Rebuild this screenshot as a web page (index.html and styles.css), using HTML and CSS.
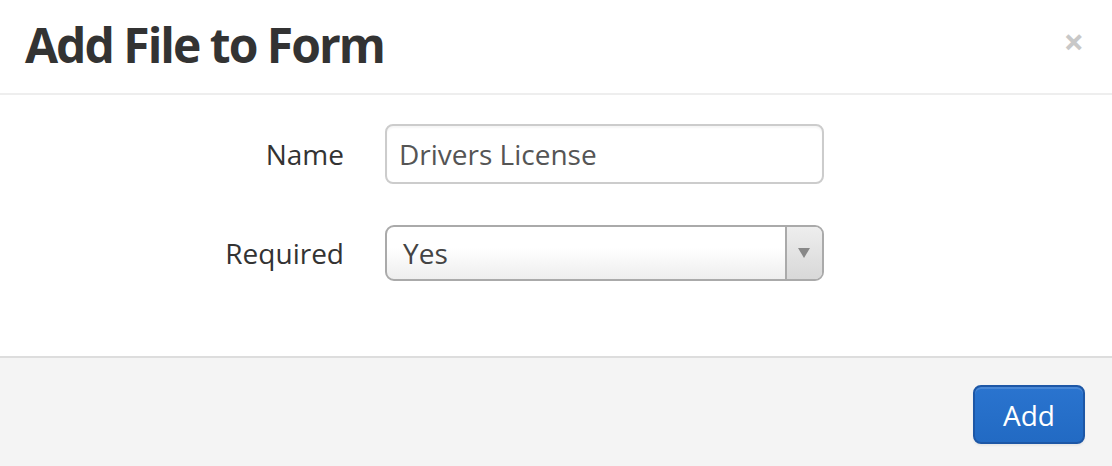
FILE: index.html
```html
<!DOCTYPE html>
<html>
<head>
<meta charset="utf-8">
<link rel="stylesheet" href="styles.css">
</head>
<body>
<div class="modal">
  <div class="modal-header">
    <h3 class="title">Add File to Form</h3>
    <span class="close">&times;</span>
  </div>
  <div class="modal-body">
    <div class="form-row">
      <label class="label">Name</label>
      <div class="text-input">Drivers License</div>
    </div>
    <div class="form-row">
      <label class="label">Required</label>
      <div class="select">
        <span class="select-value">Yes</span>
        <span class="select-arrow"><span class="tri"></span></span>
      </div>
    </div>
  </div>
  <div class="modal-footer">
    <button class="btn-primary">Add</button>
  </div>
</div>
</body>
</html>
```

FILE: styles.css
```css
html, body {
  margin: 0;
  padding: 0;
  background: #fff;
  font-family: "Open Sans", "Liberation Sans", sans-serif;
}
.modal {
  width: 1112px;
  height: 466px;
  display: flex;
  flex-direction: column;
  background: #fff;
}
.modal-header {
  height: 95px;
  box-sizing: border-box;
  border-bottom: 2px solid #eeeeee;
  padding: 0 28px 0 25px;
  display: flex;
  align-items: center;
  justify-content: space-between;
}
.title {
  margin: 0;
  font-size: 48px;
  font-weight: 700;
  color: #333;
  letter-spacing: -2px;
  line-height: 1;
  padding-bottom: 3px;
}
.close {
  color: #c8c8c8;
  font-size: 36px;
  font-weight: 700;
  line-height: 1;
  margin-top: -10px;
}
.modal-body {
  flex: 1;
  padding-top: 29px;
  display: flex;
  flex-direction: column;
  gap: 41px;
}
.form-row {
  display: flex;
  align-items: center;
  gap: 41px;
}
.label {
  width: 344px;
  text-align: right;
  font-size: 28px;
  color: #333;
}
.text-input {
  width: 439px;
  height: 60px;
  box-sizing: border-box;
  border: 2px solid #cccccc;
  border-radius: 8px;
  padding: 0 12px;
  display: flex;
  align-items: center;
  font-size: 28px;
  color: #555;
  box-shadow: inset 0 2px 2px rgba(0,0,0,0.04);
}
.select {
  width: 439px;
  height: 56px;
  box-sizing: border-box;
  border: 2px solid #aaaaaa;
  border-radius: 9px;
  display: flex;
  align-items: stretch;
  background: linear-gradient(#ffffff 0%, #ffffff 40%, #eeeeee 100%);
  overflow: hidden;
}
.select-value {
  flex: 1;
  display: flex;
  align-items: center;
  padding-left: 16px;
  font-size: 28px;
  color: #444;
}
.select-arrow {
  width: 35px;
  border-left: 2px solid #aaaaaa;
  background: linear-gradient(#eeeeee, #d8d8d8);
  display: flex;
  align-items: center;
  justify-content: center;
}
.tri {
  width: 0;
  height: 0;
  border-left: 6px solid transparent;
  border-right: 6px solid transparent;
  border-top: 10px solid #888;
  margin-right: 2px;
}
.modal-footer {
  height: 110px;
  box-sizing: border-box;
  border-top: 2px solid #dddddd;
  background: #f4f4f4;
  display: flex;
  justify-content: flex-end;
  align-items: flex-start;
  padding: 27px 27px 0 0;
}
.btn-primary {
  width: 112px;
  height: 59px;
  box-sizing: border-box;
  border: 2px solid #1d57a6;
  border-radius: 8px;
  background: linear-gradient(#2a74cf, #226ac3);
  box-shadow: inset 0 2px 0 rgba(255,255,255,0.15), 0 2px 2px rgba(0,0,0,0.05);
  color: #fff;
  font-family: "Open Sans", "Liberation Sans", sans-serif;
  font-size: 28px;
  padding: 0;
  line-height: 1;
}
```
